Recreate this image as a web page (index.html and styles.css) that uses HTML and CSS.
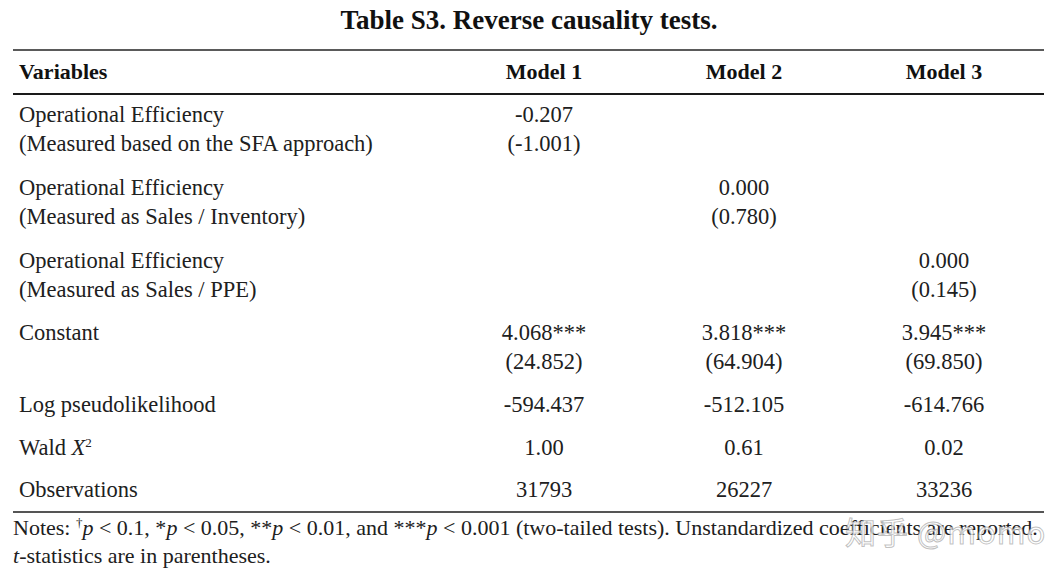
FILE: index.html
```html
<!DOCTYPE html>
<html>
<head>
<meta charset="utf-8">
<link rel="stylesheet" href="styles.css">
</head>
<body>
<div class="page">
  <h1 class="title">Table S3. Reverse causality tests.</h1>
  <table class="results">
    <colgroup>
      <col class="c-var"><col class="c-model"><col class="c-model"><col class="c-model">
    </colgroup>
    <thead>
      <tr><th class="var">Variables</th><th>Model 1</th><th>Model 2</th><th>Model 3</th></tr>
    </thead>
    <tbody>
      <tr class="first tall"><td class="var">Operational Efficiency<br>(Measured based on the SFA approach)</td><td>-0.207<br>(-1.001)</td><td></td><td></td></tr>
      <tr class="tall"><td class="var">Operational Efficiency<br>(Measured as Sales / Inventory)</td><td></td><td>0.000<br>(0.780)</td><td></td></tr>
      <tr><td class="var">Operational Efficiency<br>(Measured as Sales / PPE)</td><td></td><td></td><td>0.000<br>(0.145)</td></tr>
      <tr><td class="var">Constant</td><td>4.068***<br>(24.852)</td><td>3.818***<br>(64.904)</td><td>3.945***<br>(69.850)</td></tr>
      <tr><td class="var">Log pseudolikelihood</td><td>-594.437</td><td>-512.105</td><td>-614.766</td></tr>
      <tr><td class="var">Wald <i>X</i><sup>2</sup></td><td>1.00</td><td>0.61</td><td>0.02</td></tr>
      <tr class="last"><td class="var">Observations</td><td>31793</td><td>26227</td><td>33236</td></tr>
    </tbody>
  </table>
  <p class="notes">Notes: <sup>†</sup><i>p</i> &lt; 0.1, *<i>p</i> &lt; 0.05, **<i>p</i> &lt; 0.01, and ***<i>p</i> &lt; 0.001 (two-tailed tests). Unstandardized coefficients are reported.<br><i>t</i>-statistics are in parentheses.</p>
  <div class="watermark">知乎 @momo</div>
</div>
</body>
</html>
```

FILE: styles.css
```css
html, body {
  margin: 0;
  padding: 0;
  background: #ffffff;
}
body {
  font-family: "Liberation Serif", "Times New Roman", serif;
  color: #202020;
}
.page {
  position: relative;
  width: 1058px;
  height: 580px;
  overflow: hidden;
}
.title {
  margin: 5px 0 0 0;
  font-size: 27px;
  line-height: 30px;
  font-weight: bold;
  text-align: center;
  color: #111;
}
.results {
  margin: 14px 0 0 13px;
  width: 1030px;
  table-layout: fixed;
  border-collapse: collapse;
  border-top: 2px solid #5a5a5a;
  border-bottom: 2px solid #555;
  font-size: 22.5px;
  line-height: 29px;
}
.c-var { width: 431px; }
.c-model { width: 200px; }
.results th {
  font-size: 22px;
  font-weight: bold;
  padding: 6px 0 7px 0;
  text-align: center;
  border-bottom: 2px solid #1a1a1a;
  color: #111;
}
.results td {
  padding: 7px 0;
  text-align: center;
  vertical-align: top;
}
.results tr.first td { padding-top: 5px; }
.results tr.tall td { padding-bottom: 8px; }
.results tr.last td { padding-top: 6px; }
.results .var {
  text-align: left;
  padding-left: 6px;
}
.results sup {
  font-size: 13px;
  line-height: 0;
  vertical-align: 8px;
}
.notes {
  margin: 0 0 0 13px;
  padding-top: 1px;
  font-size: 22px;
  line-height: 28px;
  white-space: nowrap;
}
.notes sup {
  font-size: 13px;
  line-height: 0;
  vertical-align: 8px;
}
.watermark {
  position: absolute;
  left: 845px;
  top: 511px;
  font-family: "Noto Sans CJK SC", "Noto Sans", sans-serif;
  font-size: 31px;
  line-height: 40px;
  color: rgba(255, 255, 255, 0.75);
  -webkit-text-stroke: 1px rgba(140, 140, 140, 0.55);
  letter-spacing: 1px;
}
```
